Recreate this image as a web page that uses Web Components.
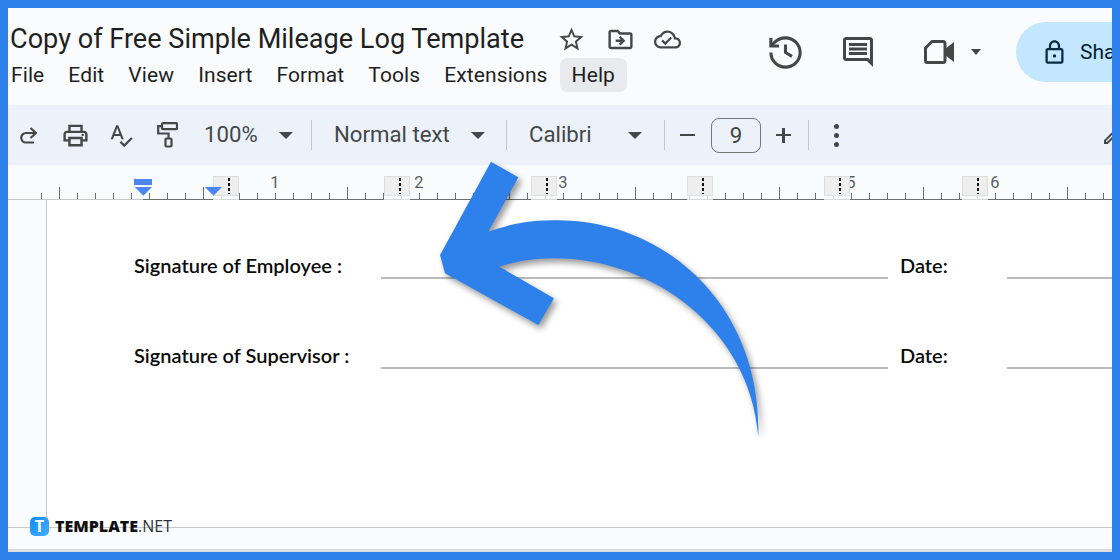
<!DOCTYPE html>
<html lang="en">
<head>
<meta charset="utf-8">
<title>Copy of Free Simple Mileage Log Template</title>
<style>
    html, body { margin: 0; padding: 0; background: #2e81ea; }
</style>
</head>
<body>
<doc-app>
    <top-bar slot="top">
        <menu-item>File</menu-item>
        <menu-item>Edit</menu-item>
        <menu-item>View</menu-item>
        <menu-item>Insert</menu-item>
        <menu-item>Format</menu-item>
        <menu-item>Tools</menu-item>
        <menu-item>Extensions</menu-item>
        <menu-item active>Help</menu-item>
    </top-bar>
    <tool-bar slot="tools"></tool-bar>
    <ruler-bar slot="ruler"></ruler-bar>
    <doc-page slot="page">
        <sig-row label="Signature of Employee :"></sig-row>
        <sig-row label="Signature of Supervisor :"></sig-row>
    </doc-page>
    <curved-arrow slot="over"></curved-arrow>
    <template-badge slot="over"></template-badge>
</doc-app>

<script type="text/javascript">
    (function(){
        const ICONS = {
            star: '<path fill="currentColor" d="M22 9.24l-7.19-.62L12 2 9.19 8.63 2 9.24l5.46 4.73L5.82 21 12 17.27 18.18 21l-1.63-7.03L22 9.24zM12 15.4l-3.76 2.27 1-4.28-3.32-2.88 4.38-.38L12 6.1l1.71 4.04 4.38.38-3.32 2.88 1 4.28L12 15.4z"/>',
            folder: '<path fill="currentColor" d="M20 6h-8l-2-2H4c-1.1 0-2 .9-2 2v12c0 1.1.9 2 2 2h16c1.1 0 2-.9 2-2V8c0-1.1-.9-2-2-2zm0 12H4V6h5.17l2 2H20v10zm-8.01-9l-1.41 1.41L12.16 12H8v2h4.16l-1.59 1.59L11.99 17 16 13.01 11.99 9z"/>',
            cloud: '<path fill="currentColor" d="M19.35 10.04C18.67 6.59 15.64 4 12 4 9.11 4 6.6 5.64 5.35 8.04 2.34 8.36 0 10.91 0 14c0 3.31 2.69 6 6 6h13c2.76 0 5-2.24 5-5 0-2.64-2.05-4.78-4.65-4.96zM19 18H6c-2.21 0-4-1.79-4-4 0-2.05 1.53-3.76 3.56-3.97l1.07-.11.5-.95C8.08 7.14 9.94 6 12 6c2.62 0 4.88 1.86 5.39 4.43l.3 1.5 1.53.11c1.56.1 2.78 1.41 2.78 2.96 0 1.65-1.35 3-3 3zm-9-3.82l-2.09-2.09L6.5 13.5 10 17l6.01-6.01-1.41-1.41z"/>',
            history: '<g fill="none" stroke="currentColor" stroke-width="1.9"><path d="M3 12a9 9 0 1 0 9-9 9.75 9.75 0 0 0-6.74 2.74L3 8"/><path d="M3 3v5h5"/><path d="M12 7v5l4 2.4"/></g>',
            comment: '<path fill="currentColor" d="M20 17.17L18.83 16H4V4h16v13.17zM20 2H4c-1.1 0-2 .9-2 2v12c0 1.1.9 2 2 2h14l4 4V4c0-1.1-.9-2-2-2z"/><path fill="currentColor" d="M6 12h12v2H6zM6 9h12v2H6zM6 6h12v2H6z"/>',
            lock: '<path fill="currentColor" d="M18 8h-1V6c0-2.76-2.24-5-5-5S7 3.24 7 6v2H6c-1.1 0-2 .9-2 2v10c0 1.1.9 2 2 2h12c1.1 0 2-.9 2-2V10c0-1.1-.9-2-2-2zM9 6c0-1.66 1.34-3 3-3s3 1.34 3 3v2H9V6zm9 14H6V10h12v10z"/><circle fill="currentColor" cx="12" cy="15" r="1.5"/>',
            print: '<path fill="currentColor" d="M19 8h-1V3H6v5H5c-1.66 0-3 1.34-3 3v6h4v4h12v-4h4v-6c0-1.66-1.34-3-3-3zM8 5h8v3H8V5zm8 12v2H8v-4h8v2zm2-2v-2H6v2H4v-4c0-.55.45-1 1-1h14c.55 0 1 .45 1 1v4h-2z"/><circle fill="currentColor" cx="18" cy="11.5" r="1"/>',
            spell: '<path fill="currentColor" d="M12.45 16h2.09L9.43 3H7.57L2.46 16h2.09l1.12-3h5.64l1.14 3zm-6.02-5L8.5 5.48 10.57 11H6.43z"/><path fill="none" stroke="currentColor" stroke-width="2" d="M11.4 18.2l3.6 3.6 7-7"/>',
            edit: '<path fill="currentColor" d="M14.06 9.02l.92.92L5.92 19H5v-.92l9.06-9.06M17.66 3c-.25 0-.51.1-.7.29l-1.83 1.83 3.75 3.75 1.83-1.83c.39-.39.39-1.02 0-1.41l-2.34-2.34c-.2-.2-.45-.29-.71-.29zm-3.6 3.19L3 17.25V21h3.75L17.81 9.94l-3.75-3.75z"/>'
        };

        class XIcon extends HTMLElement {
            constructor() {
                super();
                const size = this.getAttribute('size') || 24;
                const name = this.getAttribute('name');
                this.attachShadow({mode: 'open'}).innerHTML = `
                    <style>
                        :host { display: block; flex: none; width: ${size}px; height: ${size}px; color: #444746; }
                        svg { display: block; width: 100%; height: 100%; }
                    </style>
                    <svg viewBox="0 0 24 24">${ICONS[name]}</svg>`;
            }
        }

        class DocApp extends HTMLElement {
            constructor() {
                super();
                this.attachShadow({mode: 'open'}).innerHTML = `
                    <style>
                        :host {
                            display: flex;
                            flex-direction: column;
                            position: relative;
                            box-sizing: border-box;
                            width: 1120px;
                            height: 560px;
                            border: 8px solid #2e81ea;
                            overflow: hidden;
                            background: #f9fbfd;
                        }
                        .foot { height: 21px; flex: none; background: #f9fbfd; }
                        .edge { height: 3px; flex: none; background: #dcdde0; }
                    </style>
                    <slot name="top"></slot>
                    <slot name="tools"></slot>
                    <slot name="ruler"></slot>
                    <slot name="page"></slot>
                    <div class="foot"></div>
                    <div class="edge"></div>
                    <slot name="over"></slot>`;
            }
        }

        class TopBar extends HTMLElement {
            constructor() {
                super();
                this.attachShadow({mode: 'open'}).innerHTML = `
                    <style>
                        :host { display: flex; flex: none; height: 97px; font-family: Roboto, sans-serif; background: #f9fbfd; }
                        .left { display: flex; flex-direction: column; flex: none; }
                        .title-row { display: flex; align-items: center; height: 38px; padding-top: 12px; }
                        .title {
                            width: 549px; padding: 0 0 1px 2px; box-sizing: border-box;
                            font-size: 27.1px; color: #1f1f1f; white-space: nowrap;
                        }
                        .menu { display: flex; padding-left: 3px; height: 34px; }
                        .right { display: flex; align-items: center; margin-left: auto; height: 60px; margin-top: 14px; margin-right: -30px; }
                        .caret { width: 0; height: 0; border: 5.5px solid transparent; border-top: 6px solid #444746; border-bottom: 0; margin-left: 17px; flex: none; }
                        .video { display: block; width: 30px; height: 24px; margin-left: 48px; flex: none; }
                        .share {
                            display: flex; align-items: center; box-sizing: border-box;
                            width: 126px; height: 60px; margin-left: 35px; padding-left: 25px;
                            border-radius: 30px; background: #c2e7ff; color: #001d35;
                            font-size: 21px; white-space: nowrap;
                        }
                        .share x-icon { color: #0b2a45; margin-right: 12px; }
                    </style>
                    <div class="left">
                        <div class="title-row">
                            <div class="title">Copy of Free Simple Mileage Log Template</div>
                            <x-icon name="star" size="29"></x-icon>
                            <x-icon name="folder" size="29" style="margin-left:20px"></x-icon>
                            <x-icon name="cloud" size="27" style="margin-left:19px"></x-icon>
                        </div>
                        <div class="menu"><slot></slot></div>
                    </div>
                    <div class="right">
                        <x-icon name="history" size="39"></x-icon>
                        <x-icon name="comment" size="36" style="margin-left:35px"></x-icon>
                        <svg class="video" viewBox="0 0 30 24">
                            <path fill="none" stroke="#444746" stroke-width="3" stroke-linejoin="round" d="M8 1.5H19a2 2 0 0 1 2 2V20.5a2 2 0 0 1-2 2H3.5a2 2 0 0 1-2-2V8Z"/>
                            <path fill="#444746" d="M21 9l9-7V22l-9-7Z"/>
                        </svg>
                        <span class="caret"></span>
                        <div class="share"><x-icon name="lock" size="27"></x-icon>Share</div>
                    </div>`;
            }
        }

        class MenuItem extends HTMLElement {
            constructor() {
                super();
                this.attachShadow({mode: 'open'}).innerHTML = `
                    <style>
                        :host {
                            display: block; padding: 0 12px; height: 34px; line-height: 34px;
                            font-family: Roboto, sans-serif; font-size: 21px; letter-spacing: .1px; color: #1f1f1f;
                            border-radius: 7px;
                        }
                        :host(:first-child) { padding-left: 0; }
                        :host([active]) { background: #e8eaed; }
                    </style>
                    <slot></slot>`;
            }
        }

        class ToolBar extends HTMLElement {
            constructor() {
                super();
                this.attachShadow({mode: 'open'}).innerHTML = `
                    <style>
                        :host {
                            display: flex; align-items: center; flex: none; height: 60px;
                            background: #edf2fa; color: #444746;
                            font-family: Roboto, sans-serif; font-size: 22.2px;
                        }
                        .cell { display: flex; justify-content: center; align-items: center; flex: none; }
                        .txt { flex: none; white-space: nowrap; padding-bottom: 2px; }
                        .caret { flex: none; width: 0; height: 0; border: 7px solid transparent; border-top: 7px solid #444746; border-bottom: 0; }
                        .sep { flex: none; width: 1px; height: 30px; background: #c7c7c7; }
                        .box {
                            flex: none; box-sizing: border-box; width: 50px; height: 35px;
                            border: 1px solid #747775; border-radius: 8px;
                            text-align: center; line-height: 32px;
                        }
                        .bar { flex: none; width: 15px; height: 2.5px; background: #444746; position: relative; }
                        .plus::after { content: ""; position: absolute; left: 6.25px; top: -6.25px; width: 2.5px; height: 15px; background: #444746; }
                        .dots { flex: none; display: flex; flex-direction: column; gap: 4px; }
                        .dots i { display: block; width: 5px; height: 5px; border-radius: 50%; background: #444746; }
                    </style>
                    <div class="cell" style="width:40px">
                        <svg width="18" height="17" viewBox="0 0 18 17"><path fill="none" stroke="#444746" stroke-width="2.2" d="M17 6H7a4.5 4.5 0 0 0 0 9.5h8"/><path fill="none" stroke="#444746" stroke-width="2.2" d="M11.5 1l5.5 5-5.5 5"/></svg>
                    </div>
                    <div class="cell" style="width:54px"><x-icon name="print" size="29"></x-icon></div>
                    <div class="cell" style="width:38px"><x-icon name="spell" size="26"></x-icon></div>
                    <div class="cell" style="width:54px">
                        <svg width="21" height="26" viewBox="0 0 21 26"><g fill="none" stroke="#444746" stroke-width="2.2"><rect x="5" y="1.2" width="15" height="6" rx="1"/><path d="M5 4.2H1.2V11.5H11.5V16"/><rect x="8.5" y="16.5" width="6" height="8" rx="1"/></g></svg>
                    </div>
                    <span class="txt" style="margin-left:10px;width:56px">100%</span>
                    <span class="caret" style="margin-left:19px"></span>
                    <span class="sep" style="margin-left:18px"></span>
                    <span class="txt" style="margin-left:22px;width:116px">Normal text</span>
                    <span class="caret" style="margin-left:21px"></span>
                    <span class="sep" style="margin-left:21px"></span>
                    <span class="txt" style="margin-left:22px;width:65px">Calibri</span>
                    <span class="caret" style="margin-left:34px"></span>
                    <span class="sep" style="margin-left:22px"></span>
                    <span class="bar" style="margin-left:15px"></span>
                    <div class="box" style="margin-left:16px">9</div>
                    <span class="bar plus" style="margin-left:15px"></span>
                    <span class="sep" style="margin-left:17px"></span>
                    <div class="dots" style="margin-left:25px"><i></i><i></i><i></i></div>
                    <x-icon name="edit" size="24" style="margin-left:262px"></x-icon>`;
            }
        }

        class RulerBar extends HTMLElement {
            constructor() {
                super();
                let ticks = '';
                for (let x = 41; x < 1112; x += 18) {
                    const long = (x - 59) % 144 === 0;
                    ticks += `<rect x="${x}" y="${long ? 187 : 193}" width="1" height="${long ? 12 : 6}" fill="#6f6f6f"/>`;
                }
                const markers = [213, 384, 531, 687, 824, 962];
                const covers = markers.map(x => `<rect x="${x}" y="196" width="26" height="4" fill="#f9fbfd" fill-opacity=".75"/>`).join('');
                const digits = [[275, '1'], [419, '2'], [563, '3'], [707, '4'], [851, '5'], [995, '6']]
                    .map(d => `<span class="num" style="left:${d[0] - 8 - 5}px">${d[1]}</span>`).join('');
                const stops = markers.map(x => `<span class="stop" style="left:${x - 8}px"><i></i></span>`).join('');
                this.attachShadow({mode: 'open'}).innerHTML = `
                    <style>
                        :host { display: block; position: relative; flex: none; height: 35px; background: #f9fbfd; }
                        svg { position: absolute; left: 0; top: 0; }
                        .num {
                            position: absolute; top: 9px; width: 10px; text-align: center;
                            font: 16.5px/18px Roboto, sans-serif; color: #5b5e61;
                        }
                        .stop {
                            position: absolute; top: 11px; box-sizing: border-box; width: 26px; height: 20px;
                            background: #eeeeee; border: 1px solid #dedede;
                        }
                        .stop i {
                            position: absolute; left: 14px; top: 1px; bottom: 1px; width: 1.5px;
                            background: repeating-linear-gradient(#111 0 3px, transparent 3px 5px);
                        }
                    </style>
                    <svg width="1104" height="35" viewBox="8 165 1104 35">
                        ${ticks}
                        <rect x="8" y="199" width="135" height="1" fill="#c4c7c5"/>
                        <rect x="143" y="199" width="969" height="1" fill="#6f6f6f"/>
                        ${covers}
                    </svg>
                    ${digits}${stops}
                    <svg width="1104" height="35" viewBox="8 165 1104 35">
                        <rect x="134" y="179" width="18" height="6" fill="#4a86f5"/>
                        <path d="M134.7 187H152L143.3 195.7Z" fill="#4a86f5"/>
                        <path d="M205 187H222L213.5 195.7Z" fill="#4a86f5"/>
                    </svg>`;
            }
        }

        class DocPage extends HTMLElement {
            constructor() {
                super();
                this.attachShadow({mode: 'open'}).innerHTML = `
                    <style>
                        :host { display: flex; flex: 1; min-height: 0; background: #f9fbfd; border-bottom: 1px solid #c7c9cc; }
                        .gutter { flex: none; width: 38px; border-right: 1px solid #c7c9cc; }
                        .sheet {
                            flex: 1; background: #fff; display: flex; flex-direction: column;
                            gap: 63px; padding: 52px 0 0 87px; min-width: 0;
                        }
                    </style>
                    <div class="gutter"></div>
                    <div class="sheet"><slot></slot></div>`;
            }
        }

        class SigRow extends HTMLElement {
            constructor() {
                super();
                const label = this.getAttribute('label');
                this.attachShadow({mode: 'open'}).innerHTML = `
                    <style>
                        :host {
                            display: grid; grid-template-columns: 247px 507px 119px 1fr;
                            height: 27px; align-items: stretch;
                            font-family: Lato, sans-serif; font-weight: 600; font-size: 20px; color: #0b0b0b;
                        }
                        span { line-height: 27px; white-space: nowrap; }
                        .line { border-bottom: 2px solid #bbbbbb; }
                        .date { padding-left: 12px; }
                    </style>
                    <span>${label}</span>
                    <div class="line"></div>
                    <span class="date">Date:</span>
                    <div class="line"></div>`;
            }
        }

        class CurvedArrow extends HTMLElement {
            constructor() {
                super();
                this.attachShadow({mode: 'open'}).innerHTML = `
                    <style>
                        :host { position: absolute; left: 0; top: 0; display: block; width: 1104px; height: 544px; pointer-events: none; }
                        svg { display: block; filter: drop-shadow(3px 4px 3px rgba(0,0,0,.4)); }
                    </style>
                    <svg width="1104" height="544" viewBox="8 8 1104 544">
                        <path fill="#2e81ea" d="M491 161.7L518.3 177.3L488.3 231.7C510 224 530 220.3 553 220.3C664 218 762 305 758.3 436.7C750 330 654 258.3 553.3 258.3C535 258.3 517 261 499.3 266.7L554 298.3L538.3 325L445 273.3L440 255Z"/>
                    </svg>`;
            }
        }

        class TemplateBadge extends HTMLElement {
            constructor() {
                super();
                this.attachShadow({mode: 'open'}).innerHTML = `
                    <style>
                        :host {
                            position: absolute; left: 22px; top: 507px;
                            display: flex; align-items: center; gap: 6px;
                            font-family: "Open Sans", sans-serif; font-size: 16px; color: #111; white-space: nowrap;
                        }
                        .mark {
                            width: 19px; height: 19px; border-radius: 5px; text-align: center;
                            background: linear-gradient(135deg, #0f8bff, #45b0ff);
                            color: #fff; font: 700 16px/19px "Open Sans", sans-serif;
                        }
                        b { font-weight: 800; }
                        span { font-weight: 400; color: #333; }
                    </style>
                    <div class="mark">T</div>
                    <div><b>TEMPLATE</b><span>.NET</span></div>`;
            }
        }

        // publish custom elements
        customElements.define('x-icon', XIcon);
        customElements.define('doc-app', DocApp);
        customElements.define('top-bar', TopBar);
        customElements.define('menu-item', MenuItem);
        customElements.define('tool-bar', ToolBar);
        customElements.define('ruler-bar', RulerBar);
        customElements.define('doc-page', DocPage);
        customElements.define('sig-row', SigRow);
        customElements.define('curved-arrow', CurvedArrow);
        customElements.define('template-badge', TemplateBadge);
    }());
</script>
</body>
</html>
